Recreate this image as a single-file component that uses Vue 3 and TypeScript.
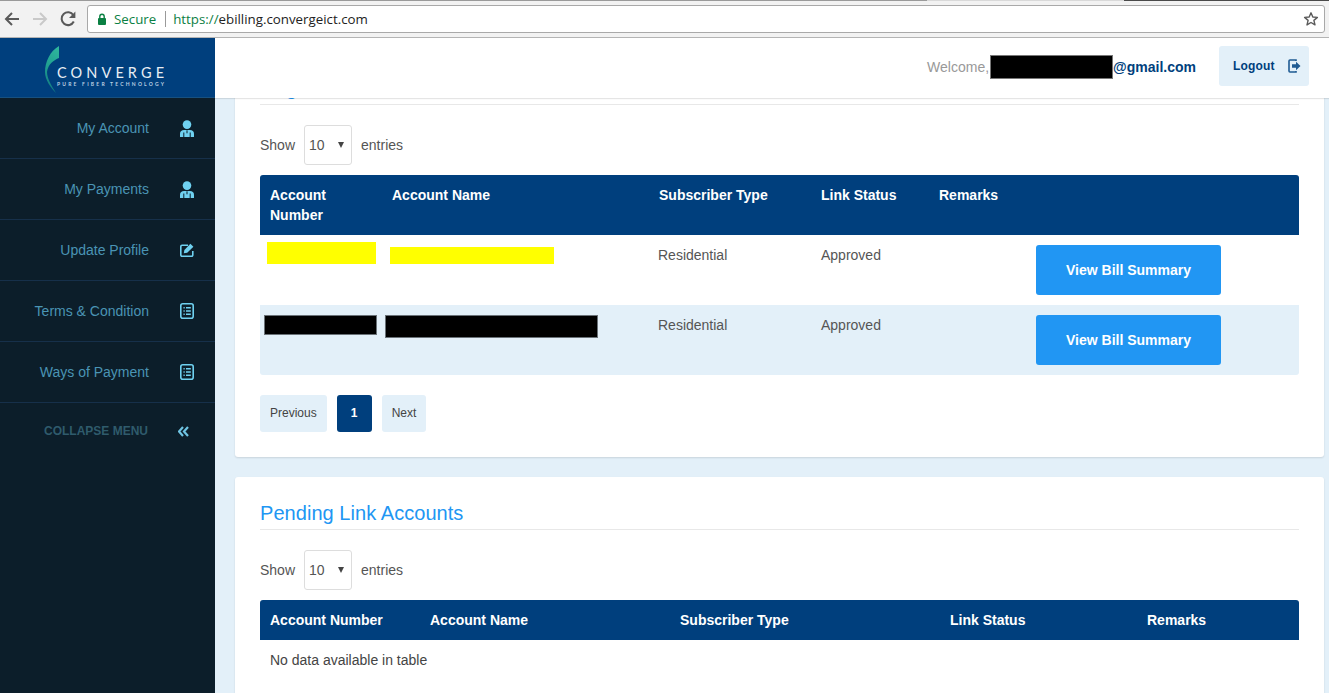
<script setup lang="ts">
interface MenuItem { label: string; icon: 'user' | 'edit' | 'list' }
const menu: MenuItem[] = [
  { label: 'My Account', icon: 'user' },
  { label: 'My Payments', icon: 'user' },
  { label: 'Update Profile', icon: 'edit' },
  { label: 'Terms & Condition', icon: 'list' },
  { label: 'Ways of Payment', icon: 'list' },
]
const pendingCols: string[] = ['Account Number', 'Account Name', 'Subscriber Type', 'Link Status', 'Remarks']
</script>

<template>
  <div class="page">
    <div class="browser">
      <div class="tabs-edge"><span class="edge-a"></span><span class="edge-b"></span></div>
      <div class="toolbar">
        <svg class="nav" width="18" height="18" viewBox="0 0 18 18"><path d="M16 9H3M9 3 3 9l6 6" fill="none" stroke="#5a5a5a" stroke-width="2"/></svg>
        <svg class="nav" width="18" height="18" viewBox="0 0 18 18"><path d="M2 9h13M9 3l6 6-6 6" fill="none" stroke="#c9c9c9" stroke-width="2"/></svg>
        <svg class="nav" width="18" height="18" viewBox="0 0 18 18"><path d="M14.8 11.5A6.4 6.4 0 1 1 14.4 5.2" fill="none" stroke="#5a5a5a" stroke-width="2"/><path d="M16.4 1.6v6.4h-6.4z" fill="#5a5a5a"/></svg>
        <div class="omnibox">
          <svg width="10" height="12" viewBox="0 0 10 12"><rect x="1" y="5" width="8" height="7" rx="1" fill="#0b8043"/><path d="M2.8 5V3.4a2.2 2.2 0 0 1 4.4 0V5" fill="none" stroke="#0b8043" stroke-width="1.4"/></svg>
          <span class="secure">Secure</span>
          <span class="omni-sep"></span>
          <span class="url"><span class="scheme">https://</span>ebilling.convergeict.com</span>
          <svg class="star" width="16" height="16" viewBox="0 0 16 16"><path d="m8 1.8 1.8 4.2 4.6.4-3.5 3 1.1 4.5L8 11.5l-4 2.4 1.1-4.5-3.5-3 4.6-.4z" fill="none" stroke="#5a5a5a" stroke-width="1.4" stroke-linejoin="round"/></svg>
        </div>
      </div>
    </div>

    <div class="app">
      <aside class="sidebar">
        <div class="logo">
          <svg class="swoosh" width="16" height="48" viewBox="0 0 16 48">
            <defs><linearGradient id="sw" x1="0.6" y1="0" x2="0.4" y2="1"><stop offset="0" stop-color="#2fb59c"/><stop offset="0.5" stop-color="#1f9f90"/><stop offset="1" stop-color="#127a80"/></linearGradient></defs>
            <path d="M15 0C6 5 1 16 1 26c0 8 6 16 11 21C7 39 3 32 3 26 4 18 10 14 15 12z" fill="url(#sw)"/>
          </svg>
          <div class="logo-text">
            <span class="brand">CONVERGE</span>
            <span class="tag">PURE FIBER TECHNOLOGY</span>
          </div>
        </div>
        <nav>
          <a v-for="item in menu" :key="item.label" class="menu-item">
            <span>{{ item.label }}</span>
            <svg v-if="item.icon === 'user'" class="micon" width="14" height="17" viewBox="0 0 14 17"><circle cx="7" cy="4.6" r="4.3" fill="#6fd1f0"/><path d="M0 17v-3.4C0 11.400 1.800 10 4 10h6c2.200 0 4 1.400 4 3.600V17z" fill="#6fd1f0"/><path d="M3.800 12.500V17M10.200 12.500V17M7 10.300v3" stroke="#0c1e2a" stroke-width="1"/></svg>
            <svg v-else-if="item.icon === 'edit'" class="micon" width="14" height="14" viewBox="0 0 14 14"><path d="M12.800 8v4a1.200 1.200 0 0 1-1.200 1.200H2A1.200 1.200 0 0 1 .8 12V3.400A1.200 1.200 0 0 1 2 2.200h6" fill="none" stroke="#6fd1f0" stroke-width="1.600"/><path d="M3.800 10.300 4.400 7l6-6.200L13.400 3.700l-6.200 6z" fill="#6fd1f0"/></svg>
            <svg v-else class="micon" width="14" height="16" viewBox="0 0 14 16"><rect x=".8" y=".8" width="12.400" height="14.400" rx="2" fill="none" stroke="#6fd1f0" stroke-width="1.600"/><path d="M3.500 4.800h1.200M6 4.800h4.800M3.500 8h1.200M6 8h4.800M3.500 11.200h1.200M6 11.200h4.800" stroke="#6fd1f0" stroke-width="1.500"/></svg>
          </a>
          <a class="collapse">
            <span>COLLAPSE MENU</span>
            <svg width="11" height="11" viewBox="0 0 11 11"><path d="M5 1 1 5.500 5 10M10 1 6 5.500l4 4.500" fill="none" stroke="#6fc4e2" stroke-width="2.200"/></svg>
          </a>
        </nav>
      </aside>

      <main class="main">
        <header class="topbar">
          <span class="welcome">Welcome,</span>
          <span class="redact-mail"></span>
          <span class="mail">@gmail.com</span>
          <button class="logout">
            <span>Logout</span>
            <svg width="13" height="16" viewBox="0 0 13 16"><path d="M8 3V2H2a1 1 0 0 0-1 1v10a1 1 0 0 0 1 1h6v-1" fill="none" stroke="#1f5b93" stroke-width="1.600"/><path d="M4 6.300h4V3.800L12.500 8 8 12.200V9.700H4z" fill="#1f5b93"/></svg>
          </button>
        </header>

        <div class="scroller">
          <section class="card first">
            <h2 class="title">Registered Accounts</h2>
            <div class="length"><span>Show</span><div class="select"><span>10</span><i></i></div><span>entries</span></div>
            <div class="table-wrap">
              <table class="tbl linked">
                <colgroup><col class="c1"><col class="c2"><col class="c3"><col class="c4"><col class="c5"><col></colgroup>
                <thead><tr><th>Account Number</th><th>Account Name</th><th>Subscriber Type</th><th>Link Status</th><th>Remarks</th><th></th></tr></thead>
                <tbody>
                  <tr v-for="n in 2" :key="n">
                    <td></td><td></td>
                    <td class="nudge">Residential</td><td>Approved</td><td></td>
                    <td><button class="view">View Bill Summary</button></td>
                  </tr>
                </tbody>
              </table>
              <span class="mask y1"></span>
              <span class="mask y2"></span>
              <span class="mask b1"></span>
              <span class="mask b2"></span>
            </div>
            <div class="pager">
              <a class="pg">Previous</a>
              <a class="pg on">1</a>
              <a class="pg">Next</a>
            </div>
          </section>

          <section class="card">
            <h2 class="title">Pending Link Accounts</h2>
            <div class="length"><span>Show</span><div class="select"><span>10</span><i></i></div><span>entries</span></div>
            <table class="tbl pending">
              <colgroup><col class="p1"><col class="p2"><col class="p3"><col class="p4"><col></colgroup>
              <thead><tr><th v-for="c in pendingCols" :key="c">{{ c }}</th></tr></thead>
              <tbody><tr><td colspan="5" class="empty">No data available in table</td></tr></tbody>
            </table>
          </section>
        </div>
      </main>
    </div>
  </div>
</template>

<style>
html, body { margin: 0; height: 100%; overflow: hidden; }
</style>

<style scoped>
.page {
  width: 1329px; height: 693px; overflow: hidden;
  display: flex; flex-direction: column;
  font-family: "Liberation Sans", Arial, sans-serif; font-size: 14px; color: #444;
}
.browser { flex: none; height: 38px; background: #f2f2f2; box-sizing: border-box; border-bottom: 1px solid #b4b4b4; }
.tabs-edge { height: 1px; background: #9a9a9a; display: flex; justify-content: flex-end; }
.edge-a { width: 197px; background: #d9d9d9; }
.edge-b { width: 205px; background: #4a4a4a; }
.toolbar { display: flex; align-items: center; height: 28px; margin-top: 4px; padding-left: 3px; padding-right: 4px; }
.nav { flex: none; margin-right: 10px; }
.omnibox {
  flex: 1; height: 28px; box-sizing: border-box;
  background: #fff; border: 1px solid #a9a9a9; border-radius: 3px;
  display: flex; align-items: center; padding-left: 9px; padding-right: 5px;
  font-family: "Open Sans", sans-serif; font-size: 13.3px; color: #222;
}
.secure { color: #0b8043; margin-left: 7px; }
.omni-sep { width: 1px; height: 16px; background: #9a9a9a; margin: 0 7px 0 9px; }
.scheme { color: #0b8043; }
.url { flex: 1; }
.star { flex: none; }

.app { flex: 1; display: flex; min-height: 0; }
.sidebar { flex: none; width: 215px; background: #0c1e2a; }
.logo {
  height: 60px; box-sizing: border-box; background: #003f7d; border-bottom: 1px solid #17507f;
  display: flex; align-items: flex-start; padding: 8px 0 0 44px;
}
.swoosh { flex: none; }
.logo-text { display: flex; flex-direction: column; margin: 19px 0 0 -3px; color: #e8eef4; line-height: 1; }
.brand { font-family: Lato, sans-serif; font-size: 14.5px; letter-spacing: 4.1px; line-height: 15px; white-space: nowrap; }
.tag { font-family: Lato, sans-serif; font-size: 5px; font-weight: 700; letter-spacing: 2.2px; line-height: 6px; margin-top: 1px; white-space: nowrap; color: #bcd0e2; }
.menu-item {
  height: 61px; box-sizing: border-box; border-bottom: 1px solid #16304a;
  display: flex; align-items: center; justify-content: flex-end; padding-right: 21px;
  color: #4a94b4; font-size: 14px;
}
.menu-item span { margin-right: 31px; }
.micon { flex: none; }
.collapse {
  display: flex; align-items: center; justify-content: flex-end; height: 56px; padding-right: 26px;
  color: #2f5b6c; font-size: 12px; font-weight: 700;
}
.collapse span { margin-right: 30px; }

.main { flex: 1; min-width: 0; background: #e3f0f9; display: flex; flex-direction: column; }
.topbar {
  flex: none; height: 60px; box-sizing: border-box; background: #fff; position: relative; z-index: 2;
  box-shadow: 0 1px 1px rgba(0,0,0,.1);
  display: flex; align-items: center; padding: 0 20px 2px 0;
  justify-content: flex-end;
}
.welcome { color: #999; font-size: 14px; margin-right: 1px; }
.redact-mail { width: 121px; height: 22px; background: #000; border: 1px solid #777; }
.mail { color: #003f7d; font-weight: 700; font-size: 14px; margin-right: 23px; }
.logout {
  width: 90px; height: 40px; border: 0; border-radius: 3px; background: #e3f0f9; color: #003f7d;
  font: 700 12px "Liberation Sans", Arial, sans-serif; letter-spacing: .15px; margin-top: -2px;
  display: flex; align-items: center; padding: 0 8px 0 14px; justify-content: space-between;
}
.scroller { flex: 1; min-height: 0; overflow: hidden; padding: 0 5px 0 20px; }
.card {
  background: #fff; border-radius: 3px; box-shadow: 0 1px 2px rgba(0,0,0,.12);
  padding: 21px 25px 25px; margin-bottom: 20px;
}
.first { margin-top: -46px; }
.title {
  margin: 0; height: 32px; box-sizing: border-box; border-bottom: 1px solid #e8e8e8;
  font-size: 20px; font-weight: 400; line-height: 30px; color: #2196f3; letter-spacing: .05px;
}
.length { display: flex; align-items: center; margin: 20px 0 10px; height: 40px; gap: 9px; color: #555; }
.select {
  width: 48px; height: 40px; box-sizing: border-box; border: 1px solid #ddd; border-radius: 3px;
  display: flex; align-items: center; justify-content: space-between; padding: 0 7px 0 4px; background: #fff;
}
.select i { width: 0; height: 0; border-left: 3px solid transparent; border-right: 3px solid transparent; border-top: 6px solid #444; }
.table-wrap { position: relative; }
.tbl { width: 1039px; border-collapse: separate; border-spacing: 0; table-layout: fixed; font-size: 14px; }
.c1 { width: 122px; } .c2 { width: 267px; } .c3 { width: 162px; } .c4 { width: 118px; } .c5 { width: 97px; }
.p1 { width: 160px; } .p2 { width: 250px; } .p3 { width: 270px; } .p4 { width: 197px; }
.tbl th {
  background: #003f7d; color: #fff; font-weight: 700; text-align: left; vertical-align: top;
  padding: 10px; line-height: 20px;
}
.tbl th:first-child { border-top-left-radius: 3px; }
.tbl th:last-child { border-top-right-radius: 3px; }
.tbl td { padding: 10px; vertical-align: top; line-height: 20px; color: #555; }
.linked th { height: 40px; }
.linked tbody tr:nth-child(2) td { background: #e3f0f9; }
.linked tbody tr:nth-child(2) td:first-child { border-bottom-left-radius: 3px; }
.linked tbody tr:nth-child(2) td:last-child { border-bottom-right-radius: 3px; }
.nudge { padding-left: 9px !important; }
.view {
  display: block; width: 185px; height: 50px; border: 0; border-radius: 3px; background: #2196f3; color: #fff;
  font: 700 14px "Liberation Sans", Arial, sans-serif; padding: 0;
}
.mask { position: absolute; box-sizing: border-box; }
.y1 { left: 7px; top: 67px; width: 109px; height: 22px; background: #ff0; }
.y2 { left: 130px; top: 72px; width: 164px; height: 17px; background: #ff0; }
.b1 { left: 4px; top: 140px; width: 113px; height: 20px; background: #000; border: 1px solid #6a7278; }
.b2 { left: 125px; top: 140px; width: 213px; height: 23px; background: #000; border: 1px solid #6a7278; }
.pager { display: flex; gap: 10px; margin-top: 20px; }
.pg {
  height: 37px; padding: 0 10px; border-radius: 3px; background: #e3f0f9; color: #444;
  font-size: 12px; line-height: 36px;
}
.pg.on { background: #003f7d; color: #fff; font-weight: 700; padding: 0; width: 35px; text-align: center; }
.pending th { height: 20px; }
.empty { color: #444 !important; }
</style>
